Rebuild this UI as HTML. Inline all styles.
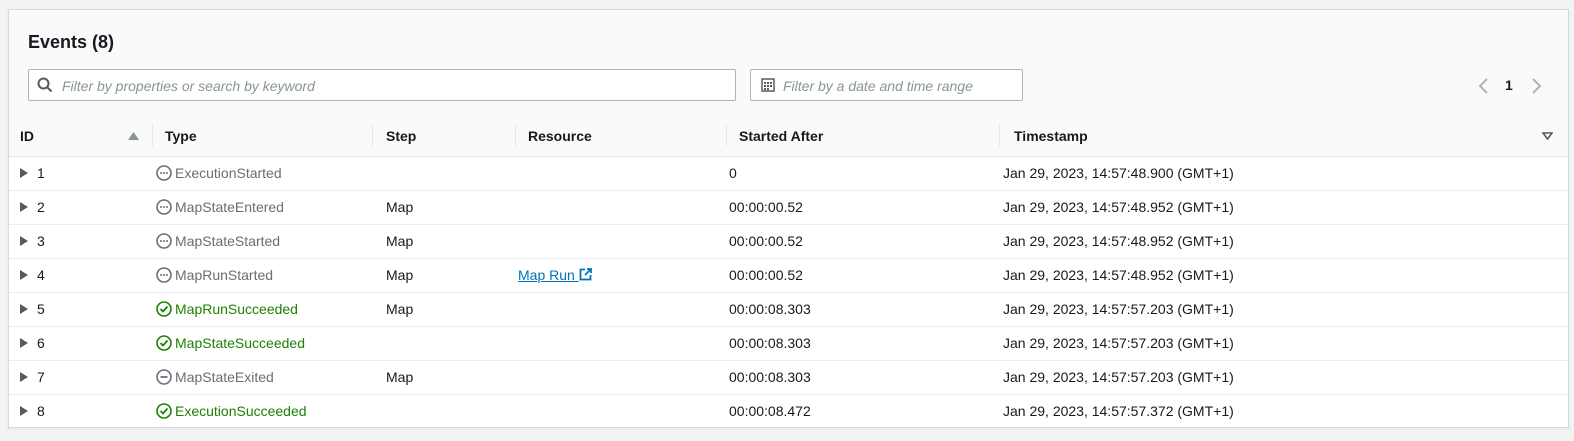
<!DOCTYPE html>
<html><head><style>
body{margin:0;background:#f2f3f3;font-family:"Liberation Sans",sans-serif;width:1574px;height:441px;overflow:hidden;position:relative;color:#16191f}
.card{position:absolute;left:8px;top:9px;width:1559px;height:417px;background:#fff;border:1px solid #d5dbdb;box-shadow:0 1px 1px rgba(0,0,0,.15)}
.hd{position:absolute;left:0;top:0;width:100%;height:146px;background:#fafafa;border-bottom:1px solid #e6e8e8}
.abs{position:absolute;white-space:nowrap}
.box{position:absolute;height:30px;border:1px solid #aab7b8;background:#fff;top:59px;border-radius:2px}
.ph{position:absolute;top:8px;font-style:italic;color:#879596;font-size:14px}
.th{position:absolute;top:118px;font-weight:bold;font-size:14px}
.div{position:absolute;top:114px;width:1px;height:22px;background:#e6e8e8}
.row{position:absolute;left:0;width:100%;height:34px;border-bottom:1px solid #eaeded;font-size:14px}
.row span{position:absolute;top:9px;white-space:nowrap}
.tri{width:0;height:0;border-left:8px solid #545b64;border-top:5px solid transparent;border-bottom:5px solid transparent;top:12px!important}
.g{color:#6a6e73}.gr{color:#1d8102}
</style></head><body>
<div class="card">
<div class="hd">
<div class="abs" style="left:19px;top:22px;font-size:18px;font-weight:bold">Events (8)</div>
<div class="box" style="left:19px;width:706px">
<svg class="abs" style="left:8px;top:7px" width="16" height="16" viewBox="0 0 16 16"><circle cx="6.5" cy="6.5" r="5" fill="none" stroke="#545b64" stroke-width="2"/><line x1="10" y1="10" x2="14.5" y2="14.5" stroke="#545b64" stroke-width="2"/></svg>
<div class="ph" style="left:33px">Filter by properties or search by keyword</div></div>
<div class="box" style="left:741px;width:271px">
<svg class="abs" style="left:10px;top:8px" width="14" height="14" viewBox="0 0 14 14"><rect x="1" y="1" width="12" height="12" fill="none" stroke="#545b64" stroke-width="1.5"/><g fill="#545b64"><rect x="3" y="4" width="2" height="2"/><rect x="6" y="4" width="2" height="2"/><rect x="9" y="4" width="2" height="2"/><rect x="3" y="7" width="2" height="2"/><rect x="6" y="7" width="2" height="2"/><rect x="9" y="7" width="2" height="2"/><rect x="3" y="10" width="2" height="2"/><rect x="6" y="10" width="2" height="2"/></g></svg>
<div class="ph" style="left:32px">Filter by a date and time range</div></div>
<svg class="abs" style="left:1468px;top:67px" width="12" height="18" viewBox="0 0 12 18"><path d="M10 2L3 9l7 7" fill="none" stroke="#aab7b8" stroke-width="2"/></svg>
<div class="abs" style="left:1496px;top:67px;font-weight:bold;font-size:14px">1</div>
<svg class="abs" style="left:1522px;top:67px" width="12" height="18" viewBox="0 0 12 18"><path d="M2 2l7 7-7 7" fill="none" stroke="#aab7b8" stroke-width="2"/></svg>
<div class="th" style="left:11px">ID</div>
<svg class="abs" style="left:119px;top:122px" width="11" height="8"><path d="M0 8L5.5 0L11 8Z" fill="#879596"/></svg>
<div class="div" style="left:143px"></div>
<div class="th" style="left:156px">Type</div><div class="div" style="left:363px"></div>
<div class="th" style="left:377px">Step</div><div class="div" style="left:506px"></div>
<div class="th" style="left:519px">Resource</div><div class="div" style="left:717px"></div>
<div class="th" style="left:730px">Started After</div><div class="div" style="left:990px"></div>
<div class="th" style="left:1005px">Timestamp</div>
<svg class="abs" style="left:1533px;top:122px" width="11" height="8"><path d="M1 1h9L5.5 7Z" fill="none" stroke="#545b64" stroke-width="1.6"/></svg>
</div>
<div id="rows"></div>
</div>
<script>
var d=[["1","g","d","ExecutionStarted","","", "0","Jan 29, 2023, 14:57:48.900 (GMT+1)"],
["2","g","d","MapStateEntered","Map","","00:00:00.52","Jan 29, 2023, 14:57:48.952 (GMT+1)"],
["3","g","d","MapStateStarted","Map","","00:00:00.52","Jan 29, 2023, 14:57:48.952 (GMT+1)"],
["4","g","d","MapRunStarted","Map","1","00:00:00.52","Jan 29, 2023, 14:57:48.952 (GMT+1)"],
["5","gr","c","MapRunSucceeded","Map","","00:00:08.303","Jan 29, 2023, 14:57:57.203 (GMT+1)"],
["6","gr","c","MapStateSucceeded","","","00:00:08.303","Jan 29, 2023, 14:57:57.203 (GMT+1)"],
["7","g","m","MapStateExited","Map","","00:00:08.303","Jan 29, 2023, 14:57:57.203 (GMT+1)"],
["8","gr","c","ExecutionSucceeded","","","00:00:08.472","Jan 29, 2023, 14:57:57.372 (GMT+1)"]];
var h="";
d.forEach(function(r,i){
var col=r[1]=="gr"?"#1d8102":"#687078";
var ic='<svg width="16" height="16" viewBox="0 0 16 16" style="position:absolute;left:147px;top:9px"><circle cx="8" cy="8" r="7" fill="none" stroke="'+col+'" stroke-width="1.6"/>'+
(r[2]=="d"?'<g fill="'+col+'"><circle cx="5" cy="8" r="1"/><circle cx="8" cy="8" r="1"/><circle cx="11" cy="8" r="1"/></g>':r[2]=="c"?'<path d="M4.5 8l2.5 2.5 4.5-5" fill="none" stroke="'+col+'" stroke-width="1.8"/>':'<line x1="4.5" y1="8" x2="11.5" y2="8" stroke="'+col+'" stroke-width="1.8"/>')+'</svg>';
h+='<div class="row" style="top:'+(146+i*34)+'px"><span class="tri" style="left:11px"></span><span style="left:28px">'+r[0]+'</span>'+ic+
'<span class="'+r[1]+'" style="left:166px">'+r[3]+'</span><span style="left:377px">'+r[4]+'</span>'+
(r[5]?'<span style="left:509px;color:#0073bb;text-decoration:underline">Map Run <svg width="13" height="13" viewBox="0 0 13 13" style="vertical-align:-1px"><path d="M6 1.5H1.5v10h10V7M8 1h4v4M12 1L6 7" fill="none" stroke="#0073bb" stroke-width="1.8"/></svg></span>':'')+
'<span style="left:720px">'+r[6]+'</span><span style="left:994px">'+r[7]+'</span></div>';});
document.getElementById("rows").innerHTML=h;
</script>
</body></html>
